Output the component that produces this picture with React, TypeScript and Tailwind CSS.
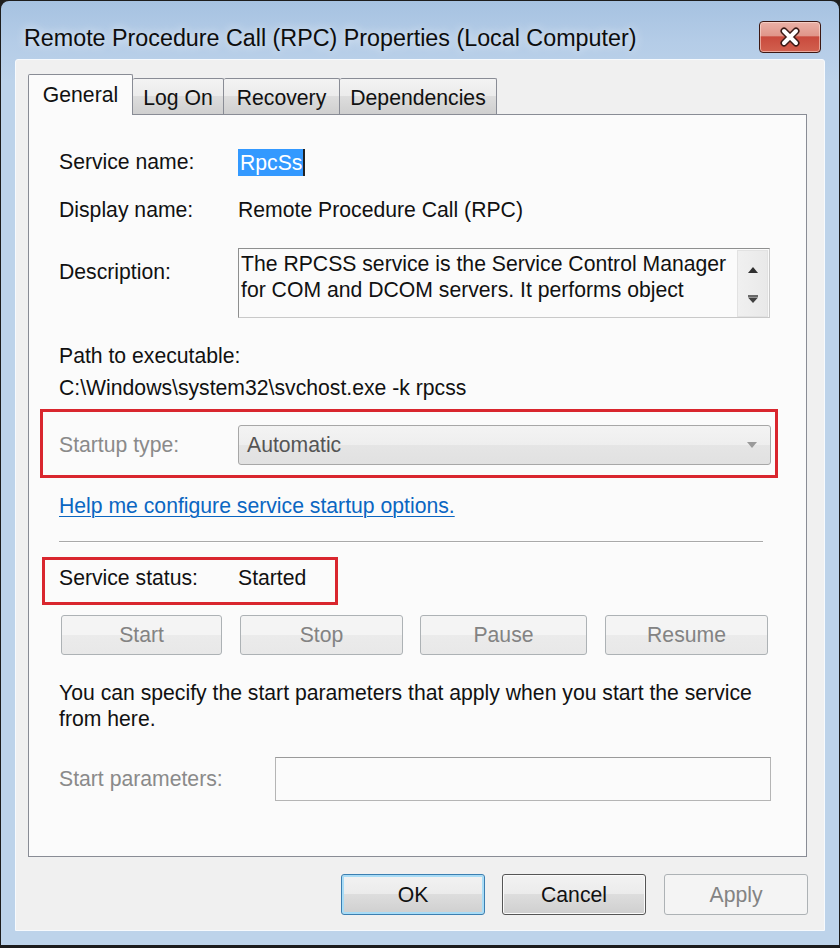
import React from "react";

function Tab({ label, active, w, first }: { label: string; active?: boolean; w: string; first?: boolean }) {
  if (active) {
    return (
      <div
        className={`${w} h-[41px] -mb-px relative z-10 flex items-center justify-center border border-b-0 border-[#898c95] bg-[#fbfbfb] rounded-t-[2px] text-[#111]`}
      >
        {label}
      </div>
    );
  }
  return (
    <div
      className={`${w} h-[36px] flex items-center justify-center border border-b-0 ${first ? "" : "border-l-0"} border-[#898c95] bg-[linear-gradient(to_bottom,#f3f3f3_0%,#ebebeb_50%,#dddddd_50%,#cfcfcf_100%)] rounded-t-[2px] text-[#111] pt-[2px]`}
    >
      {label}
    </div>
  );
}

function DisabledButton({ label, w, ml }: { label: string; w: string; ml: string }) {
  return (
    <div
      className={`${w} ${ml} h-[40px] flex items-center justify-center rounded-[3px] border border-[#adb2b5] bg-[linear-gradient(to_bottom,#f4f4f4_0%,#f4f4f4_50%,#ebebeb_50%,#e8e8e8_100%)] text-[#838383]`}
    >
      {label}
    </div>
  );
}

export default function App() {
  return (
    <div className="w-[840px] h-[948px] bg-[#1e1e1e] font-['Liberation_Sans',Arial,sans-serif] text-[21.2px] leading-[28px] text-[#111]">
      <div className="w-[840px] h-[948px] flex flex-col border border-b-[3px] border-[#1c1c1c] rounded-t-[9px] bg-[linear-gradient(to_bottom,#a6c2e1_0px,#b4cce7_40px,#bdd3ea_80px,#bdd3ea_100%)] overflow-hidden">
        {/* Title bar */}
        <div className="h-[58px] flex items-start justify-between shrink-0">
          <div className="pl-[23px] pt-[22px] leading-[30px] text-[23.3px] text-[#0d0d0d] [text-shadow:0_0_10px_rgba(255,255,255,0.9)]">
            Remote Procedure Call (RPC) Properties (Local Computer)
          </div>
          <div className="mt-[20px] mr-[18px] w-[62px] h-[32px] rounded-[4px] border border-[#3d1812] bg-[linear-gradient(to_bottom,#eab1a6_0%,#e0968a_45%,#c94a3d_50%,#d2614f_100%)] shadow-[inset_0_0_0_1px_rgba(255,230,220,0.55)] flex items-center justify-center">
            <svg width="26" height="20" viewBox="0 0 26 20">
              <path d="M7 4 L19 16 M19 4 L7 16" stroke="#3a1a16" strokeWidth="7" strokeLinecap="round" fill="none" />
              <path d="M7 4 L19 16 M19 4 L7 16" stroke="#ffffff" strokeWidth="4" strokeLinecap="round" fill="none" />
            </svg>
          </div>
        </div>

        {/* Client area */}
        <div className="px-[14px] flex-1 flex flex-col">
          <div className="h-[872px] border border-[#f7fafd] bg-[#f0f0f0] rounded-t-[3px] flex flex-col pt-[14px] pl-[12px] pr-[16px]">
            {/* Tabs */}
            <div className="h-[40px] flex items-end">
              <Tab label="General" active w="w-[105px]" />
              <Tab label="Log On" w="w-[91px]" />
              <Tab label="Recovery" w="w-[116px]" />
              <Tab label="Dependencies" w="w-[157px]" />
            </div>

            {/* Panel */}
            <div className="w-[779px] h-[743px] border border-[#898c95] bg-[#fbfbfb] pl-[30px] flex flex-col">
              {/* Service name */}
              <div className="mt-[33px] h-[28px] flex items-center">
                <div className="w-[179px]">Service name:</div>
                <span className="inline-block h-[27px] leading-[27px] pl-[2px] pr-[1px] bg-[#3399ff] text-white border-r-2 border-[#222]">
                  RpcSs
                </span>
              </div>
              {/* Display name */}
              <div className="mt-[20px] h-[28px] flex items-center">
                <div className="w-[179px]">Display name:</div>
                <div>Remote Procedure Call (RPC)</div>
              </div>
              {/* Description */}
              <div className="mt-[24px] h-[70px] flex items-start">
                <div className="w-[179px] mt-[10px]">Description:</div>
                <div className="w-[532px] h-[70px] border border-[#c9c9c9] border-t-[#8e8f8f] border-l-[#8e8f8f] bg-[#fbfbfb] flex">
                  <div className="flex-1 pl-[2px] pt-[2px] leading-[26px] whitespace-nowrap overflow-hidden">
                    The RPCSS service is the Service Control Manager
                    <br />
                    for COM and DCOM servers. It performs object
                  </div>
                  <div className="w-[31px] h-[67px] mt-px mr-px border border-[#e2e2e2] bg-[linear-gradient(to_right,#f0f0f0,#e9e9e9)] flex flex-col items-center justify-between pt-[15px] pb-[12px]">
                    <svg width="12" height="8" viewBox="0 0 12 8">
                      <path d="M6 1 L11 7 L1 7 Z" fill="#303030" />
                    </svg>
                    <svg width="12" height="9" viewBox="0 0 12 9">
                      <path d="M1 1 L11 1" stroke="#303030" strokeWidth="1.4" />
                      <path d="M1 2.5 L11 2.5 L6 8 Z" fill="#404040" />
                    </svg>
                  </div>
                </div>
              </div>
              {/* Path */}
              <div className="mt-[24px] h-[28px] flex items-center">Path to executable:</div>
              <div className="mt-[4px] h-[28px] flex items-center">C:\Windows\system32\svchost.exe -k rpcss</div>

              {/* Startup type (red box) */}
              <div className="mt-[7px] -ml-[19px] w-[738px] h-[69px] border-[3px] border-[#d9262e] pl-[16px] pt-[13px] flex items-start">
                <div className="w-[179px] h-[40px] leading-[40px] text-[#8a8a8a]">Startup type:</div>
                <div className="w-[533px] h-[40px] rounded-[3px] border border-[#a7a7a7] bg-[linear-gradient(to_bottom,#f3f3f3_0%,#eeeeee_50%,#e5e5e5_50%,#e1e1e1_100%)] flex items-center justify-between pl-[8px] pr-[12px]">
                  <span className="text-[#555555]">Automatic</span>
                  <svg width="12" height="8" viewBox="0 0 12 8">
                    <path d="M1 1 L11 1 L6 7 Z" fill="#9a9a9a" />
                  </svg>
                </div>
              </div>

              {/* Link */}
              <div className="mt-[14px] h-[28px] flex items-center">
                <span className="text-[#0a66c2] underline underline-offset-[3px] decoration-1">
                  Help me configure service startup options.
                </span>
              </div>

              {/* Separator */}
              <div className="mt-[21px] w-[704px] border-t border-b border-t-[#a9a9a9] border-b-white" />

              {/* Service status (red box) */}
              <div className="mt-[14px] -ml-[17px] w-[296px] h-[48px] border-[3px] border-[#d9262e] pl-[14px] pt-[4px] flex items-start">
                <div className="w-[179px]">Service status:</div>
                <div>Started</div>
              </div>

              {/* Buttons */}
              <div className="mt-[10px] ml-[2px] flex">
                <DisabledButton label="Start" w="w-[161px]" ml="ml-0" />
                <DisabledButton label="Stop" w="w-[163px]" ml="ml-[18px]" />
                <DisabledButton label="Pause" w="w-[167px]" ml="ml-[17px]" />
                <DisabledButton label="Resume" w="w-[163px]" ml="ml-[18px]" />
              </div>

              {/* Paragraph */}
              <div className="mt-[25px] leading-[26px] whitespace-nowrap">
                You can specify the start parameters that apply when you start the service
                <br />
                from here.
              </div>

              {/* Start parameters */}
              <div className="mt-[25px] h-[44px] flex items-center">
                <div className="w-[216px] text-[#8a8a8a]">Start parameters:</div>
                <div className="w-[496px] h-[44px] border border-[#b5b5b5] border-t-[#9a9a9a] bg-[#fbfbfb]" />
              </div>
            </div>

            {/* Dialog buttons */}
            <div className="mt-[17px] flex justify-end">
              <div className="w-[144px] h-[41px] rounded-[3px] border border-[#3c7fb1] bg-[linear-gradient(to_bottom,#f2f2f2_0%,#ebebeb_50%,#dddddd_50%,#cfcfcf_100%)] shadow-[inset_0_0_0_2px_#a9dcf6] flex items-center justify-center text-[#111]">
                OK
              </div>
              <div className="ml-[17px] w-[144px] h-[41px] rounded-[3px] border border-[#555] bg-[linear-gradient(to_bottom,#f2f2f2_0%,#ebebeb_50%,#dddddd_50%,#cfcfcf_100%)] shadow-[inset_0_0_0_1px_#fbfbfb] flex items-center justify-center text-[#111]">
                Cancel
              </div>
              <div className="ml-[18px] w-[144px] h-[41px] rounded-[3px] border border-[#adb2b5] bg-[#f4f4f4] flex items-center justify-center text-[#838383]">
                Apply
              </div>
            </div>
          </div>
        </div>
      </div>
    </div>
  );
}
